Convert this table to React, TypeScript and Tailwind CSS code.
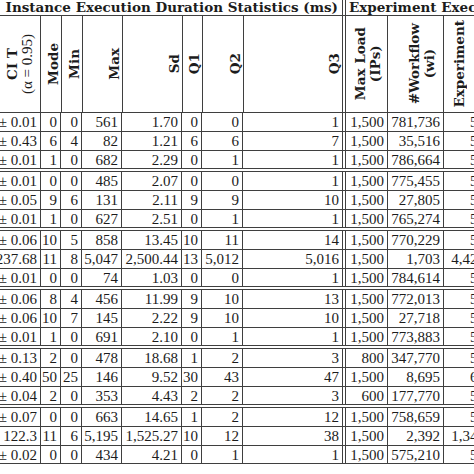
import React from "react";

const COLS =
  "grid grid-cols-[101px_20px_21px_40px_60px_20px_41px_100px_3px_42px_56px_44px]";
const LINE = "border-[#3f3f3f]";

const groups: string[][][] = [
  [
    ["± 0.01", "0", "0", "561", "1.70", "0", "0", "1", "1,500", "781,736", "52"],
    ["± 0.43", "6", "4", "82", "1.21", "6", "6", "7", "1,500", "35,516", "52"],
    ["± 0.01", "1", "0", "682", "2.29", "0", "1", "1", "1,500", "786,664", "52"],
  ],
  [
    ["± 0.01", "0", "0", "485", "2.07", "0", "0", "1", "1,500", "775,455", "52"],
    ["± 0.05", "9", "6", "131", "2.11", "9", "9", "10", "1,500", "27,805", "52"],
    ["± 0.01", "1", "0", "627", "2.51", "0", "1", "1", "1,500", "765,274", "52"],
  ],
  [
    ["± 0.06", "10", "5", "858", "13.45", "10", "11", "14", "1,500", "770,229", "52"],
    ["± 237.68", "11", "8", "5,047", "2,500.44", "13", "5,012", "5,016", "1,500", "1,703", "4,428"],
    ["± 0.01", "0", "0", "74", "1.03", "0", "0", "1", "1,500", "784,614", "52"],
  ],
  [
    ["± 0.06", "8", "4", "456", "11.99", "9", "10", "13", "1,500", "772,013", "52"],
    ["± 0.06", "10", "7", "145", "2.22", "9", "10", "10", "1,500", "27,718", "52"],
    ["± 0.01", "1", "0", "691", "2.10", "0", "1", "1", "1,500", "773,883", "52"],
  ],
  [
    ["± 0.13", "2", "0", "478", "18.68", "1", "2", "3", "800", "347,770", "52"],
    ["± 0.40", "50", "25", "146", "9.52", "30", "43", "47", "1,500", "8,695", "64"],
    ["± 0.04", "2", "0", "353", "4.43", "2", "2", "3", "600", "177,770", "52"],
  ],
  [
    ["± 0.07", "0", "0", "663", "14.65", "1", "2", "12", "1,500", "758,659", "52"],
    ["± 122.3", "11", "6", "5,195", "1,525.27", "10", "12", "38", "1,500", "2,392", "1,346"],
    ["± 0.02", "0", "0", "434", "4.21", "0", "1", "1", "1,500", "575,210", "52"],
  ],
];

function Cell({ children }: { children: React.ReactNode }) {
  return (
    <div className={`flex items-center justify-end whitespace-nowrap border-r ${LINE} pr-[3px] leading-[18px]`}>
      {children}
    </div>
  );
}

function Row({ r, h }: { r: string[]; h: string }) {
  return (
    <div className={`${COLS} ${h} border-b ${LINE}`}>
      {r.slice(0, 8).map((v, i) => (
        <Cell key={i}>{v}</Cell>
      ))}
      <div className={`border-r ${LINE}`} />
      <Cell>{r[8]}</Cell>
      <Cell>{r[9]}</Cell>
      <div className="flex items-center justify-end whitespace-nowrap pr-[3px] leading-[18px]">{r[10]}</div>
    </div>
  );
}

function VHead({ lines, pr = "pr-0" }: { lines: React.ReactNode[]; pr?: string }) {
  return (
    <div className={`flex items-center justify-end border-r ${LINE} ${pr}`}>
      <div className="rotate-180 whitespace-nowrap text-center leading-[15px] [writing-mode:vertical-rl]">
        {lines.map((l, i) => (
          <div key={i}>{l}</div>
        ))}
      </div>
    </div>
  );
}

const BOLD = "font-['DejaVu_Serif',serif] text-[13.5px] font-bold";

export default function App() {
  return (
    <div className="h-[474px] w-[474px] overflow-hidden bg-white font-['Liberation_Serif',serif] text-[15px] text-[#1c1c1c]">
      <div className="-ml-[60px] w-[548px]">
        {/* title row */}
        <div className={`${COLS} h-[16px] border-b ${LINE}`}>
          <div className={`col-span-8 flex items-end justify-end whitespace-nowrap border-r ${LINE} pr-[4px] leading-[15px] ${BOLD}`}>
            Instance Execution Duration Statistics (ms)
          </div>
          <div className={`border-r ${LINE}`} />
          <div className={`col-span-3 flex items-end whitespace-nowrap pl-[3px] leading-[15px] ${BOLD}`}>
            Experiment Execution Summary
          </div>
        </div>

        {/* header row */}
        <div className={`${COLS} h-[97px] border-b ${LINE} ${BOLD}`}>
          <VHead
            pr="pr-[5px]"
            lines={[
              "CI T",
              <span key="a" className="font-['Liberation_Serif',serif] text-[15px] font-normal">
                (α = 0.95)
              </span>,
            ]}
          />
          <VHead pr="-mr-[1px]" lines={["Mode"]} />
          <VHead pr="-mr-[1px]" lines={["Min"]} />
          <VHead pr="-mr-[1px]" lines={["Max"]} />
          <VHead pr="-mr-[1px]" lines={["Sd"]} />
          <VHead pr="-mr-[1px]" lines={["Q1"]} />
          <VHead pr="-mr-[1px]" lines={["Q2"]} />
          <VHead pr="pr-0" lines={["Q3"]} />
          <div className={`border-r ${LINE}`} />
          <VHead pr="pr-[4px]" lines={["Max Load", "(IPs)"]} />
          <VHead pr="pr-[6px]" lines={["#Workflow", "(wi)"]} />
          <div className="flex items-center pl-[8px]">
            <div className="rotate-180 whitespace-nowrap text-center leading-[15px] [writing-mode:vertical-rl]">
              Experiment
            </div>
          </div>
        </div>

        {groups.map((g, gi) => (
          <React.Fragment key={gi}>
            {gi > 0 && <div className={`h-[3px] border-b ${LINE}`} />}
            <Row r={g[0]} h="h-[19px]" />
            <Row r={g[1]} h="h-[19px]" />
            <Row r={g[2]} h="h-[18px]" />
          </React.Fragment>
        ))}
      </div>
    </div>
  );
}
